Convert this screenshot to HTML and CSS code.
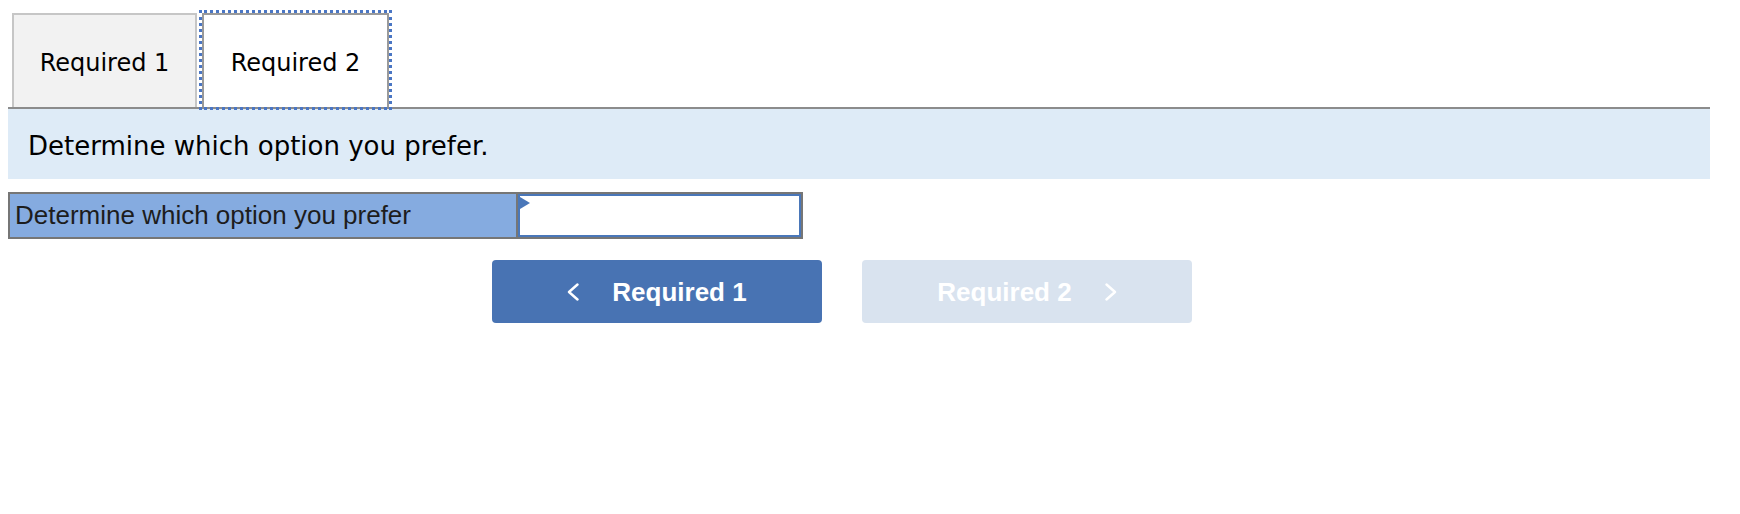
FILE: index.html
```html
<!DOCTYPE html>
<html lang="en">
<head>
<meta charset="utf-8">
<title>Required 2</title>
<link rel="stylesheet" href="styles.css">
</head>
<body>
<div class="tabs">
  <div class="tab">Required 1</div>
  <div class="tab tab-active">Required 2</div>
</div>
<div class="instruction">Determine which option you prefer.</div>
<div class="answer-row">
  <div class="answer-label">Determine which option you prefer</div>
  <div class="answer-input">
    <span class="flag"></span>
  </div>
</div>
<div class="nav">
  <button class="nav-btn nav-prev" type="button">
    <svg class="chev" width="12" height="18" viewBox="0 0 12 18"><polyline points="10.5,1.5 2,9 10.5,16.5" fill="none" stroke="#fff" stroke-width="2.4" stroke-linecap="round" stroke-linejoin="round"/></svg>
    <span>Required 1</span>
  </button>
  <button class="nav-btn nav-next" type="button">
    <span>Required 2</span>
    <svg class="chev" width="12" height="18" viewBox="0 0 12 18"><polyline points="1.5,1.5 10,9 1.5,16.5" fill="none" stroke="#fff" stroke-width="2.4" stroke-linecap="round" stroke-linejoin="round"/></svg>
  </button>
</div>
</body>
</html>
```
FILE: styles.css
```css
* { box-sizing: border-box; }

body {
  margin: 8px;
  width: 1702px;
  background: #ffffff;
  font-family: "DejaVu Sans", Verdana, sans-serif;
  color: #000;
}

.tabs {
  display: flex;
  gap: 5px;
  padding: 5px 0 0 4px;
  border-bottom: 2px solid #8c8c8c;
}

.tab {
  width: 185px;
  height: 94px;
  padding-top: 34px;
  text-align: center;
  font-size: 24px;
  line-height: 28px;
  background: #f2f2f2;
  border: 2px solid #c6c6c6;
  border-bottom: none;
}

.tab-active {
  width: 187px;
  background: #ffffff;
  border-color: #9a9a9a;
  outline: 3px dotted #4a76c4;
  outline-offset: 0;
}

.instruction {
  height: 70px;
  padding: 22px 20px 0;
  font-size: 26px;
  line-height: 30px;
  background: #deebf7;
}

.answer-row {
  display: flex;
  width: 795px;
  height: 47px;
  margin-top: 13px;
  border: 2px solid #767676;
}

.answer-label {
  width: 508px;
  padding-left: 5px;
  font-family: "Liberation Sans", Arial, sans-serif;
  font-size: 26px;
  line-height: 43px;
  color: #1d1d1d;
  background: #85abe0;
  border-right: 2px solid #767676;
}

.answer-input {
  position: relative;
  flex: 1;
  background: #fff;
  border: 2px solid #4a77b9;
}

.flag {
  position: absolute;
  left: 0;
  top: 1px;
  width: 0;
  height: 0;
  border-top: 6px solid transparent;
  border-bottom: 6px solid transparent;
  border-left: 10px solid #4a77b9;
}

.nav {
  display: flex;
  gap: 40px;
  margin-top: 21px;
  padding-left: 484px;
}

.nav-btn {
  display: flex;
  align-items: center;
  justify-content: center;
  gap: 33px;
  width: 330px;
  height: 63px;
  padding: 1px 0 0;
  border: none;
  border-radius: 4px;
  font-family: "Liberation Sans", Arial, sans-serif;
  font-weight: bold;
  font-size: 26px;
  line-height: 30px;
  color: #ffffff;
}

.nav-prev { background: #4873b3; }
.nav-next { background: #d9e3ef; }

.chev { display: block; flex: none; }
```
